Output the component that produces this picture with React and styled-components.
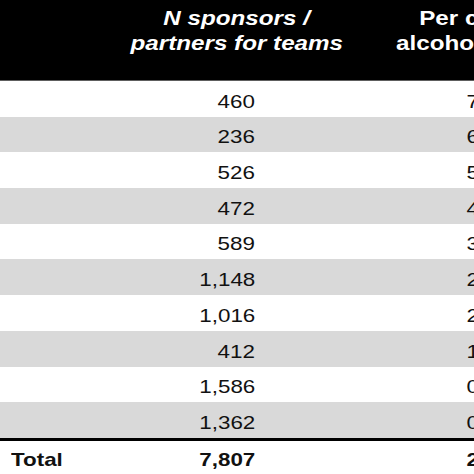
import React from "react";
import styled, { createGlobalStyle } from "styled-components";

const Global = createGlobalStyle`
  html, body { margin: 0; padding: 0; background: #ffffff; overflow: hidden; }
  body { font-family: "Liberation Sans", Arial, sans-serif; }
`;

const Frame = styled.div`
  width: 474px;
  height: 474px;
  overflow: hidden;
`;

const Table = styled.div`
  width: 600px;
  display: flex;
  flex-direction: column;
`;

const cols = "110px 254px 236px";

const HeadRow = styled.div`
  display: grid;
  grid-template-columns: ${cols};
  height: 80px;
  background: #000;
  border-bottom: 1px solid #5e5e5e;
`;

const HeadCell = styled.div`
  display: flex;
  flex-direction: column;
  align-items: center;
  padding-top: 6.3px;
  color: #fff;
  font-weight: 700;
  font-style: ${(p) => (p.$italic ? "italic" : "normal")};
  font-size: 20px;
  line-height: 25px;
  white-space: nowrap;
`;

const Row = styled.div`
  display: grid;
  grid-template-columns: ${cols};
  height: 35.7px;
  background: ${(p) => (p.$shade ? "#d9d9d9" : "#ffffff")};
`;

const TotalRow = styled.div`
  display: grid;
  grid-template-columns: ${cols};
  height: 40px;
  background: #fff;
  border-top: 3px solid #000;
`;

const Cell = styled.div`
  text-align: ${(p) => p.$align || "right"};
  padding-top: ${(p) => (p.$total ? "4.3px" : "5.7px")};
  padding-left: ${(p) => p.$pl || "0px"};
  padding-right: ${(p) => p.$pr || "0px"};
  font-size: 18.5px;
  line-height: 30px;
  font-weight: ${(p) => (p.$total ? 700 : 400)};
  color: #111;
  white-space: nowrap;
`;

const Txt = styled.span`
  display: inline-block;
  transform: scaleX(1.21);
  transform-origin: ${(p) => p.$origin || "right"} center;
`;

const data = [
  ["460", "7.4"],
  ["236", "6.8"],
  ["526", "5.3"],
  ["472", "4.2"],
  ["589", "3.1"],
  ["1,148", "2.6"],
  ["1,016", "2.4"],
  ["412", "1.7"],
  ["1,586", "0.9"],
  ["1,362", "0.6"],
];

export default function App() {
  return (
    <Frame>
      <Global />
      <Table>
        <HeadRow>
          <HeadCell />
          <HeadCell $italic>
            <Txt $origin="center">N sponsors /</Txt>
            <Txt $origin="center">partners for teams</Txt>
          </HeadCell>
          <HeadCell>
            <Txt $origin="center">Per cent of</Txt>
            <Txt $origin="center">alcohol brands</Txt>
          </HeadCell>
        </HeadRow>
        {data.map(([n, pct], i) => (
          <Row key={i} $shade={i % 2 === 1}>
            <Cell />
            <Cell $pr="109px">
              <Txt>{n}</Txt>
            </Cell>
            <Cell $pr="102px">
              <Txt>{pct}</Txt>
            </Cell>
          </Row>
        ))}
        <TotalRow>
          <Cell $total $align="left" $pl="11px">
            <Txt $origin="left">Total</Txt>
          </Cell>
          <Cell $total $pr="109px">
            <Txt>7,807</Txt>
          </Cell>
          <Cell $total $pr="102px">
            <Txt>2.9</Txt>
          </Cell>
        </TotalRow>
      </Table>
    </Frame>
  );
}
